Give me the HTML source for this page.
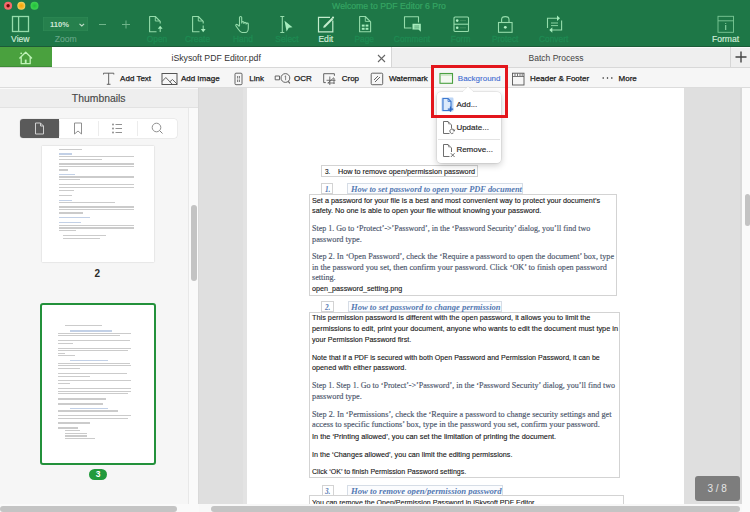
<!DOCTYPE html><html><head><meta charset="utf-8"><style>html,body{margin:0;padding:0;}body{width:750px;height:512px;overflow:hidden;position:relative;background:#dedede;font-family:"Liberation Sans",sans-serif;}body>div,body>svg{position:absolute;}</style></head><body><div style="left:0px;top:0px;width:750px;height:46px;background:#1e7747;"></div><div style="left:0px;top:45.5px;width:750px;height:1.5px;background:#1c5c38;"></div><svg style="position:absolute;left:0px;top:0px;" width="45" height="12" viewBox="0 0 45 12"><defs><radialGradient id="gy"><stop offset="0" stop-color="#f7a600"/><stop offset="0.55" stop-color="#f8b52a"/><stop offset="1" stop-color="#f3d667"/></radialGradient><radialGradient id="gg"><stop offset="0" stop-color="#1fbf38"/><stop offset="1" stop-color="#3fd452"/></radialGradient></defs><circle cx="8.1" cy="5.8" r="4" fill="#f66a6c"/><circle cx="8.1" cy="5.8" r="1.7" fill="#6e0a0a"/><circle cx="21.3" cy="5.8" r="4" fill="url(#gy)"/><circle cx="34.5" cy="5.8" r="4" fill="url(#gg)"/></svg><div style="left:389px;top:1.84px;font-family:'Liberation Sans', sans-serif;font-size:8.7px;line-height:8.7px;color:#35a563;white-space:nowrap;transform:translateX(-50%);-webkit-text-stroke:0.2px #35a563;">Welcome to PDF Editor 6 Pro</div><svg style="position:absolute;left:11px;top:15px;" width="20" height="18" viewBox="0 0 20 18"><rect x="1.5" y="1.5" width="16" height="15" fill="none" stroke="#95dcab" stroke-width="1.3"/><line x1="7.6" y1="1.5" x2="7.6" y2="16.5" stroke="#95dcab" stroke-width="1.3"/></svg><div style="left:20.3px;top:34.52px;font-family:'Liberation Sans', sans-serif;font-size:8.6px;line-height:8.6px;color:#d3eed9;white-space:nowrap;transform:translateX(-50%);-webkit-text-stroke:0.15px #d3eed9;">View</div><div style="left:43.3px;top:16.7px;width:44.7px;height:14px;background:#26804d;box-shadow:inset 0 0 0 0.6px #2f8a57;"></div><div style="left:50px;top:20.57px;font-family:'Liberation Sans', sans-serif;font-size:7.6px;line-height:7.6px;color:#cfe6d6;white-space:nowrap;font-weight:bold;">110%</div><svg style="position:absolute;left:78px;top:21.5px;" width="8" height="6" viewBox="0 0 8 6"><polyline points="1.5,1.8 3.8,4 6.1,1.8" fill="none" stroke="#c0dcc8" stroke-width="1.1"/></svg><div style="left:65.8px;top:34.72px;font-family:'Liberation Sans', sans-serif;font-size:8.6px;line-height:8.6px;color:#68a789;white-space:nowrap;transform:translateX(-50%);-webkit-text-stroke:0.1px #68a789;">Zoom</div><svg style="position:absolute;left:97px;top:18px;" width="36" height="14" viewBox="0 0 36 14"><line x1="2" y1="6.5" x2="9" y2="6.5" stroke="#6fb48a" stroke-width="1"/><line x1="25" y1="6.5" x2="33" y2="6.5" stroke="#6fb48a" stroke-width="1"/><line x1="29" y1="2.5" x2="29" y2="10.5" stroke="#6fb48a" stroke-width="1"/></svg><svg style="position:absolute;left:148px;top:15px;" width="16" height="19" viewBox="0 0 16 19"><path d="M8.5,16.8 H1.6 V1.5 H7.3 L12.2,6.4 V8.5" fill="none" stroke="#95dcab" stroke-width="1.1" stroke-linejoin="round"/><path d="M7.3,1.5 V6 H11.8" fill="none" stroke="#95dcab" stroke-width="0.9"/><path d="M12.2,10.8 L14.6,13.8 H9.8 Z" fill="#a6edbd"/><line x1="12.2" y1="13" x2="12.2" y2="17" stroke="#95dcab" stroke-width="1.1"/></svg><div style="left:157px;top:34.69px;font-family:'Liberation Sans', sans-serif;font-size:8.4px;line-height:8.4px;color:#1d8a52;white-space:nowrap;transform:translateX(-50%);-webkit-text-stroke:0.3px #1d8a52;">Open</div><svg style="position:absolute;left:191px;top:15px;" width="16" height="19" viewBox="0 0 16 19"><path d="M8.5,16.8 H1.6 V1.5 H7.3 L12.2,6.4 V8.5" fill="none" stroke="#95dcab" stroke-width="1.1" stroke-linejoin="round"/><path d="M7.3,1.5 V6 H11.8" fill="none" stroke="#95dcab" stroke-width="0.9"/><line x1="12.2" y1="10.5" x2="12.2" y2="14" stroke="#95dcab" stroke-width="1.1"/><path d="M12.2,17.2 L14.6,14 H9.8 Z" fill="#a6edbd"/></svg><div style="left:197.5px;top:34.69px;font-family:'Liberation Sans', sans-serif;font-size:8.4px;line-height:8.4px;color:#1d8a52;white-space:nowrap;transform:translateX(-50%);-webkit-text-stroke:0.3px #1d8a52;">Create</div><svg style="position:absolute;left:234px;top:15px;" width="18" height="19" viewBox="0 0 18 19"><path d="M5.5,11 V2.6 C5.5,1.2 7.7,1.2 7.7,2.6 V8.5 M7.7,7.6 C7.7,6.3 9.9,6.3 9.9,7.6 V9 M9.9,8.3 C9.9,7 12.1,7 12.1,8.3 V9.5 M12.1,9 C12.1,7.8 14.3,7.8 14.3,9 V13 C14.3,15.5 13,17.5 11.5,17.5 H8 C6.5,17.5 5.5,16 4.5,14.5 L2,11 C1.3,10 2.3,8.8 3.4,9.6 L5.5,11.5" fill="none" stroke="#95dcab" stroke-width="1.1" stroke-linejoin="round"/></svg><div style="left:243px;top:34.69px;font-family:'Liberation Sans', sans-serif;font-size:8.4px;line-height:8.4px;color:#1d8a52;white-space:nowrap;transform:translateX(-50%);-webkit-text-stroke:0.3px #1d8a52;">Hand</div><svg style="position:absolute;left:278px;top:15px;" width="18" height="19" viewBox="0 0 18 19"><line x1="4.3" y1="1.5" x2="4.3" y2="17.5" stroke="#95dcab" stroke-width="1.1"/><line x1="2.3" y1="1.5" x2="6.3" y2="1.5" stroke="#95dcab" stroke-width="1"/><line x1="2.3" y1="17.5" x2="6.3" y2="17.5" stroke="#95dcab" stroke-width="1"/><path d="M6.5,5.8 L14.5,12.3 L10.8,12.7 L8.6,16.6 Z" fill="#a6edbd"/></svg><div style="left:287px;top:34.69px;font-family:'Liberation Sans', sans-serif;font-size:8.4px;line-height:8.4px;color:#1d8a52;white-space:nowrap;transform:translateX(-50%);-webkit-text-stroke:0.3px #1d8a52;">Select</div><svg style="position:absolute;left:317px;top:15px;" width="20" height="19" viewBox="0 0 20 19"><path d="M13,2.4 H1.5 V16.8 H15.8 V5.5" fill="none" stroke="#c4eccd" stroke-width="1.2"/><path d="M6.2,12.8 L6.6,11 L14.8,2.8 L16.3,4.3 L8.1,12.5 Z" fill="#c4eccd"/><circle cx="16" cy="2.6" r="1.1" fill="#c4eccd"/></svg><div style="left:325.8px;top:34.52px;font-family:'Liberation Sans', sans-serif;font-size:8.6px;line-height:8.6px;color:#d3eed9;white-space:nowrap;transform:translateX(-50%);-webkit-text-stroke:0.15px #d3eed9;">Edit</div><svg style="position:absolute;left:358px;top:15px;" width="16" height="19" viewBox="0 0 16 19"><path d="M1.6,1.5 H7.3 L12.6,6.8 V16.8 H1.6 Z" fill="none" stroke="#95dcab" stroke-width="1.1" stroke-linejoin="round"/><path d="M7.3,1.5 V6.4 H12.2" fill="none" stroke="#95dcab" stroke-width="0.9"/><rect x="3.8" y="9.6" width="2.8" height="2" fill="#a6edbd"/><rect x="7.6" y="9.6" width="2.8" height="2" fill="#a6edbd"/><rect x="3.8" y="12.8" width="2.8" height="2" fill="#a6edbd"/><rect x="7.6" y="12.8" width="2.8" height="2" fill="#a6edbd"/></svg><div style="left:364.2px;top:34.69px;font-family:'Liberation Sans', sans-serif;font-size:8.4px;line-height:8.4px;color:#1d8a52;white-space:nowrap;transform:translateX(-50%);-webkit-text-stroke:0.3px #1d8a52;">Page</div><svg style="position:absolute;left:403px;top:15px;" width="20" height="18" viewBox="0 0 20 18"><path d="M8.5,13 H1.5 V1.8 H15.5 V7.5" fill="none" stroke="#95dcab" stroke-width="1.1" stroke-linejoin="round"/><path d="M9.5,8.8 H17.8 V16.8 L15.5,14.6 H9.5 Z" fill="#a6edbd"/><line x1="11.3" y1="11" x2="16.2" y2="11" stroke="#1e7747" stroke-width="0.6"/><line x1="11.3" y1="12.9" x2="16.2" y2="12.9" stroke="#1e7747" stroke-width="0.6"/></svg><div style="left:412px;top:34.69px;font-family:'Liberation Sans', sans-serif;font-size:8.4px;line-height:8.4px;color:#1d8a52;white-space:nowrap;transform:translateX(-50%);-webkit-text-stroke:0.3px #1d8a52;">Comment</div><svg style="position:absolute;left:453px;top:16px;" width="17" height="17" viewBox="0 0 17 17"><rect x="1" y="1" width="14.5" height="14.5" rx="1" fill="none" stroke="#95dcab" stroke-width="1.1"/><line x1="1" y1="8.2" x2="15.5" y2="8.2" stroke="#95dcab" stroke-width="1.1"/><circle cx="4.2" cy="4.6" r="1.3" fill="#b0f0c4"/><circle cx="4.2" cy="11.8" r="1.3" fill="#b0f0c4"/><line x1="7" y1="4.6" x2="13" y2="4.6" stroke="#3f8f5e" stroke-width="1"/><line x1="7" y1="11.8" x2="13" y2="11.8" stroke="#3f8f5e" stroke-width="1"/></svg><div style="left:460.6px;top:34.69px;font-family:'Liberation Sans', sans-serif;font-size:8.4px;line-height:8.4px;color:#1d8a52;white-space:nowrap;transform:translateX(-50%);-webkit-text-stroke:0.3px #1d8a52;">Form</div><svg style="position:absolute;left:497px;top:15px;" width="17" height="19" viewBox="0 0 17 19"><path d="M4.6,7.5 V4.5 C4.6,2.4 6.2,1.6 8.3,1.6 C10.4,1.6 12,2.4 12,4.5 V7.5" fill="none" stroke="#95dcab" stroke-width="1.1"/><rect x="1.5" y="7.5" width="13.6" height="9.8" fill="none" stroke="#95dcab" stroke-width="1.1"/><circle cx="8.3" cy="12.3" r="1.4" fill="#b0f0c4"/></svg><div style="left:505.2px;top:34.69px;font-family:'Liberation Sans', sans-serif;font-size:8.4px;line-height:8.4px;color:#1d8a52;white-space:nowrap;transform:translateX(-50%);-webkit-text-stroke:0.3px #1d8a52;">Protect</div><svg style="position:absolute;left:545px;top:15px;" width="19" height="19" viewBox="0 0 19 19"><path d="M12.5,3.3 H2.5 V13" fill="none" stroke="#95dcab" stroke-width="1.1"/><path d="M12,0.6 L15,3.3 L12,6 Z" fill="#a6edbd"/><path d="M16.6,5.5 V15 H6.5" fill="none" stroke="#95dcab" stroke-width="1.1"/><path d="M7.3,12.3 L4.3,15 L7.3,17.7 Z" fill="#a6edbd"/><line x1="6" y1="8" x2="13" y2="8" stroke="#95dcab" stroke-width="0.9"/><line x1="6" y1="10.6" x2="13" y2="10.6" stroke="#95dcab" stroke-width="0.9"/></svg><div style="left:553.6px;top:34.69px;font-family:'Liberation Sans', sans-serif;font-size:8.4px;line-height:8.4px;color:#1d8a52;white-space:nowrap;transform:translateX(-50%);-webkit-text-stroke:0.3px #1d8a52;">Convert</div><svg style="position:absolute;left:717px;top:15px;" width="18" height="18" viewBox="0 0 18 18"><rect x="1" y="1.3" width="15.5" height="16" fill="none" stroke="#7cc897" stroke-width="0.9"/><line x1="1" y1="5.8" x2="16.5" y2="5.8" stroke="#7cc897" stroke-width="0.9"/><line x1="8.7" y1="10" x2="8.7" y2="15" stroke="#8fd6a6" stroke-width="1.1"/><circle cx="8.7" cy="8.5" r="0.6" fill="#8fd6a6"/></svg><div style="left:725.5px;top:34.56px;font-family:'Liberation Sans', sans-serif;font-size:8.55px;line-height:8.55px;color:#d3eed9;white-space:nowrap;transform:translateX(-50%);-webkit-text-stroke:0.15px #d3eed9;">Format</div><div style="left:0px;top:47px;width:750px;height:21px;background:#ffffff;"></div><div style="left:391px;top:47px;width:359px;height:21px;background:#efefef;"></div><div style="left:391px;top:47px;width:359px;height:1px;background:#fbfbfb;"></div><div style="left:391px;top:47px;width:1px;height:21px;background:#d6d6d6;"></div><div style="left:730px;top:47px;width:1px;height:21px;background:#d6d6d6;"></div><div style="left:0px;top:47px;width:52px;height:20px;background:#4aa13e;"></div><div style="left:0px;top:66.3px;width:52px;height:1.2px;background:#3f8c37;"></div><div style="left:0px;top:67px;width:750px;height:1px;background:#d8d8d8;"></div><svg style="position:absolute;left:18px;top:50px;" width="16" height="16" viewBox="0 0 16 16"><path d="M1.8,8 L7.7,2.3 L13.6,8 M3.2,6.6 V13.7 H12.2 V6.6" fill="none" stroke="#bff3b8" stroke-width="1.3" stroke-linejoin="round" stroke-linecap="round"/><rect x="6.8" y="9.6" width="1.8" height="4.2" fill="#bff3b8"/><circle cx="3.2" cy="3.3" r="0.9" fill="#bff3b8"/></svg><div style="left:216.2px;top:54.14px;font-family:'Liberation Sans', sans-serif;font-size:8.7px;line-height:8.7px;color:#333333;white-space:nowrap;transform:translateX(-50%);">iSkysoft PDF Editor.pdf</div><svg style="position:absolute;left:377px;top:54px;" width="9" height="9" viewBox="0 0 9 9"><path d="M1,1 L8,8 M8,1 L1,8" stroke="#666" stroke-width="1.1"/></svg><div style="left:556px;top:54.30px;font-family:'Liberation Sans', sans-serif;font-size:8.5px;line-height:8.5px;color:#444444;white-space:nowrap;transform:translateX(-50%);">Batch Process</div><svg style="position:absolute;left:735px;top:51px;" width="12" height="12" viewBox="0 0 12 12"><path d="M6,0.5 V11.5 M0.5,6 H11.5" stroke="#444" stroke-width="1.4"/></svg><div style="left:0px;top:68px;width:750px;height:20px;background:#f6f6f6;"></div><div style="left:0px;top:87px;width:750px;height:1px;background:#dcdcdc;"></div><svg style="position:absolute;left:102px;top:72px;" width="14" height="14" viewBox="0 0 14 14"><path d="M1.5,2.5 V1.2 H11.8 V2.5 M6.65,1.2 V12.3 M4.8,12.3 H8.5" fill="none" stroke="#555555" stroke-width="0.9"/></svg><div style="left:120.1px;top:74.53px;font-family:'Liberation Sans', sans-serif;font-size:8px;line-height:8px;color:#1a1a1a;white-space:nowrap;-webkit-text-stroke:0.25px #1a1a1a;">Add Text</div><svg style="position:absolute;left:161px;top:72px;" width="17" height="14" viewBox="0 0 17 14"><rect x="1" y="1.5" width="15" height="11" fill="none" stroke="#555555" stroke-width="1"/><path d="M1,9.5 L4.8,5.5 L11,12 M8.8,9.8 L11.5,7.5 L16,12" fill="none" stroke="#555555" stroke-width="0.9"/></svg><div style="left:180.9px;top:74.53px;font-family:'Liberation Sans', sans-serif;font-size:8px;line-height:8px;color:#1a1a1a;white-space:nowrap;-webkit-text-stroke:0.25px #1a1a1a;">Add Image</div><svg style="position:absolute;left:234px;top:72px;" width="9" height="14" viewBox="0 0 9 14"><rect x="1" y="1.2" width="7" height="11.5" rx="1" fill="none" stroke="#555555" stroke-width="0.9"/><path d="M3.6,4 V6.5 M5.4,4 V6.5 M3.6,7.5 V10 M5.4,7.5 V10" stroke="#555555" stroke-width="0.8"/></svg><div style="left:249.3px;top:74.53px;font-family:'Liberation Sans', sans-serif;font-size:8px;line-height:8px;color:#1a1a1a;white-space:nowrap;-webkit-text-stroke:0.25px #1a1a1a;">Link</div><svg style="position:absolute;left:274px;top:71px;" width="17" height="15" viewBox="0 0 17 15"><path d="M1.2,5 H5.5 V8.8 H1.2 Z" fill="none" stroke="#555555" stroke-width="0.9"/><circle cx="11.4" cy="7" r="4.4" fill="none" stroke="#555555" stroke-width="0.9"/><line x1="14.3" y1="10.3" x2="15.8" y2="12.3" stroke="#555555" stroke-width="1.1"/><path d="M10.7,5.5 L11.6,4.9 V9.2" fill="none" stroke="#555555" stroke-width="0.7"/></svg><div style="left:294px;top:74.53px;font-family:'Liberation Sans', sans-serif;font-size:8px;line-height:8px;color:#1a1a1a;white-space:nowrap;-webkit-text-stroke:0.25px #1a1a1a;">OCR</div><svg style="position:absolute;left:322px;top:72px;" width="15" height="15" viewBox="0 0 15 15"><path d="M3.8,10.6 H1.7 V1.7 H12.4 V3.8" fill="none" stroke="#555555" stroke-width="0.9"/><path d="M7.8,4.5 V13 M4.5,8.3 H13.5 M12,6 V12 M5.5,11 H12.5 M6,11 L12,5.5" fill="none" stroke="#555555" stroke-width="0.8"/></svg><div style="left:341.7px;top:74.53px;font-family:'Liberation Sans', sans-serif;font-size:8px;line-height:8px;color:#1a1a1a;white-space:nowrap;-webkit-text-stroke:0.25px #1a1a1a;">Crop</div><svg style="position:absolute;left:370px;top:72px;" width="14" height="14" viewBox="0 0 14 14"><rect x="1.2" y="1.2" width="11.5" height="11.5" rx="1" fill="none" stroke="#555555" stroke-width="0.9"/><path d="M4,8 L8,4 M5,10 L10,5" stroke="#555555" stroke-width="0.9"/></svg><div style="left:389px;top:74.53px;font-family:'Liberation Sans', sans-serif;font-size:8px;line-height:8px;color:#1a1a1a;white-space:nowrap;-webkit-text-stroke:0.25px #1a1a1a;">Watermark</div><svg style="position:absolute;left:439px;top:72px;" width="15" height="13" viewBox="0 0 15 13"><rect x="1" y="1.5" width="12.5" height="9.8" fill="#f4f8f1" stroke="#4aa040" stroke-width="1.1"/><line x1="1.5" y1="3" x2="13" y2="3" stroke="#9fcf95" stroke-width="0.8"/></svg><div style="left:457.8px;top:74.53px;font-family:'Liberation Sans', sans-serif;font-size:8px;line-height:8px;color:#3d6bd1;white-space:nowrap;-webkit-text-stroke:0.1px #3d6bd1;">Background</div><svg style="position:absolute;left:511px;top:72px;" width="15" height="15" viewBox="0 0 15 15"><rect x="1.5" y="1.2" width="11.5" height="11.8" fill="none" stroke="#555555" stroke-width="0.9"/><line x1="1.5" y1="4.5" x2="13" y2="4.5" stroke="#555555" stroke-width="0.8"/><path d="M4,1.5 V4 M6.5,1.5 V4 M9,1.5 V4 M11.2,1.5 V4" stroke="#555555" stroke-width="0.8"/></svg><div style="left:530px;top:74.53px;font-family:'Liberation Sans', sans-serif;font-size:8px;line-height:8px;color:#1a1a1a;white-space:nowrap;-webkit-text-stroke:0.25px #1a1a1a;">Header &amp; Footer</div><svg style="position:absolute;left:601px;top:76px;" width="13" height="4" viewBox="0 0 13 4"><circle cx="2.2" cy="2" r="0.75" fill="#1a1a1a"/><circle cx="6.5" cy="2" r="0.75" fill="#1a1a1a"/><circle cx="10.8" cy="2" r="0.75" fill="#1a1a1a"/></svg><div style="left:618.6px;top:74.53px;font-family:'Liberation Sans', sans-serif;font-size:8px;line-height:8px;color:#1a1a1a;white-space:nowrap;-webkit-text-stroke:0.25px #1a1a1a;">More</div><div style="left:0px;top:88px;width:199px;height:424px;background:#f6f6f6;"></div><div style="left:0px;top:88px;width:199px;height:20px;background:#eeeeee;"></div><div style="left:0px;top:88px;width:199px;height:1px;background:#fafafa;"></div><div style="left:0px;top:107px;width:199px;height:1px;background:#e2e2e2;"></div><div style="left:98.7px;top:93.80px;font-family:'Liberation Sans', sans-serif;font-size:10.4px;line-height:10.4px;color:#484848;white-space:nowrap;transform:translateX(-50%);-webkit-text-stroke:0.15px #484848;">Thumbnails</div><div style="left:188px;top:108px;width:1px;height:404px;background:#e8e8e8;"></div><div style="left:189px;top:108px;width:10px;height:404px;background:#fafafa;"></div><div style="left:198px;top:88px;width:1px;height:424px;background:#d9d9d9;"></div><div style="left:191px;top:204.5px;width:6px;height:76px;background:#c3c3c3;border-radius:3px;"></div><div style="left:19.5px;top:119px;width:157.5px;height:19px;background:#ffffff;border-radius:3px;box-shadow:0 0 0 0.5px #e0e0e0;"></div><div style="left:19.5px;top:119px;width:39.5px;height:19px;background:#5a5a5a;border-radius:3px 0 0 3px;"></div><div style="left:98px;top:121px;width:1px;height:15px;background:#ececec;"></div><div style="left:137.3px;top:121px;width:1px;height:15px;background:#ececec;"></div><div style="left:59px;top:121px;width:1px;height:15px;background:#ececec;"></div><svg style="position:absolute;left:34px;top:122px;" width="11" height="13" viewBox="0 0 11 13"><path d="M1.5,1 H6.5 L9.5,4 V12 H1.5 Z M6.5,1 V4 H9.5" fill="none" stroke="#d0d0d0" stroke-width="1"/></svg><svg style="position:absolute;left:73px;top:122px;" width="11" height="13" viewBox="0 0 11 13"><path d="M1.5,1 H8.5 V12 L5,9 L1.5,12 Z" fill="none" stroke="#858585" stroke-width="0.9"/></svg><svg style="position:absolute;left:111px;top:122px;" width="13" height="13" viewBox="0 0 13 13"><circle cx="2" cy="2.5" r="0.9" fill="#858585"/><circle cx="2" cy="6.5" r="0.9" fill="#858585"/><circle cx="2" cy="10.5" r="0.9" fill="#858585"/><path d="M4.5,2.5 H11 M4.5,6.5 H11 M4.5,10.5 H11" stroke="#858585" stroke-width="0.9"/></svg><svg style="position:absolute;left:151px;top:122px;" width="13" height="13" viewBox="0 0 13 13"><circle cx="5.5" cy="5.5" r="4.3" fill="none" stroke="#858585" stroke-width="0.9"/><line x1="8.6" y1="8.6" x2="11.5" y2="11.5" stroke="#858585" stroke-width="1"/></svg><div style="left:42.2px;top:146px;width:111.8px;height:115.6px;background:#fff;box-shadow:0 0 1.5px rgba(0,0,0,0.22);"></div><div style="left:58.9px;top:149.1px;width:23.000000000000007px;height:1.2px;background:#cbcbcb;"></div><div style="left:58.9px;top:153.4px;width:13.100000000000001px;height:1.2px;background:#c2d0e6;"></div><div style="left:58.9px;top:156.1px;width:75.6px;height:1.2px;background:#cbcbcb;"></div><div style="left:58.9px;top:158.70000000000002px;width:43.1px;height:1.2px;background:#cbcbcb;"></div><div style="left:58.9px;top:163.4px;width:75.6px;height:1.2px;background:#cbcbcb;"></div><div style="left:58.9px;top:166.20000000000002px;width:75.6px;height:1.2px;background:#cbcbcb;"></div><div style="left:58.9px;top:169.4px;width:9.100000000000001px;height:1.2px;background:#cbcbcb;"></div><div style="left:58.9px;top:173.70000000000002px;width:16.500000000000007px;height:1.2px;background:#c2d0e6;"></div><div style="left:58.9px;top:176.4px;width:75.6px;height:1.2px;background:#cbcbcb;"></div><div style="left:58.9px;top:179.1px;width:20.800000000000004px;height:1.2px;background:#cbcbcb;"></div><div style="left:58.9px;top:184.1px;width:75.6px;height:1.2px;background:#cbcbcb;"></div><div style="left:58.9px;top:187.1px;width:75.6px;height:1.2px;background:#cbcbcb;"></div><div style="left:58.9px;top:189.8px;width:15.100000000000001px;height:1.2px;background:#cbcbcb;"></div><div style="left:58.9px;top:194.8px;width:13.100000000000001px;height:1.2px;background:#cbcbcb;"></div><div style="left:58.9px;top:199.5px;width:13.100000000000001px;height:1.2px;background:#c2d0e6;"></div><div style="left:58.9px;top:202.3px;width:56.1px;height:1.2px;background:#cbcbcb;"></div><div style="left:58.9px;top:206.4px;width:75.6px;height:1.2px;background:#cbcbcb;"></div><div style="left:58.9px;top:209.20000000000002px;width:75.6px;height:1.2px;background:#cbcbcb;"></div><div style="left:58.9px;top:212.4px;width:24.1px;height:1.2px;background:#cbcbcb;"></div><div style="left:58.9px;top:216.70000000000002px;width:31.500000000000007px;height:1.2px;background:#c2d0e6;"></div><div style="left:58.9px;top:221.6px;width:21.9px;height:1.2px;background:#c2d0e6;"></div><div style="left:58.9px;top:224.6px;width:75.6px;height:1.2px;background:#cbcbcb;"></div><div style="left:58.9px;top:227.4px;width:75.6px;height:1.2px;background:#cbcbcb;"></div><div style="left:58.9px;top:230.20000000000002px;width:17.6px;height:1.2px;background:#cbcbcb;"></div><div style="left:62.5px;top:234.5px;width:43.0px;height:1.2px;background:#cbcbcb;"></div><div style="left:62.5px;top:238.20000000000002px;width:37.5px;height:1.2px;background:#cbcbcb;"></div><div style="left:97.4px;top:269.04px;font-family:'Liberation Sans', sans-serif;font-size:10px;line-height:10px;color:#2a2a2a;white-space:nowrap;transform:translateX(-50%);font-weight:bold;">2</div><div style="left:40.2px;top:303.2px;width:115.6px;height:161.4px;background:#fff;border:2.3px solid #23913b;border-radius:3px;box-sizing:border-box;"></div><div style="left:65px;top:325.29999999999995px;width:36.5px;height:1.2px;background:#cbcbcb;"></div><div style="left:70px;top:330.4px;width:41.5px;height:1.2px;background:#c2d0e6;"></div><div style="left:58.3px;top:332.59999999999997px;width:72.7px;height:1.2px;background:#cbcbcb;"></div><div style="left:58.3px;top:335.29999999999995px;width:61.5px;height:1.2px;background:#cbcbcb;"></div><div style="left:58.3px;top:340.29999999999995px;width:71.50000000000001px;height:1.2px;background:#cbcbcb;"></div><div style="left:58.3px;top:342.9px;width:14.700000000000003px;height:1.2px;background:#cbcbcb;"></div><div style="left:58.3px;top:347.59999999999997px;width:72.7px;height:1.2px;background:#cbcbcb;"></div><div style="left:58.3px;top:350.29999999999995px;width:69.7px;height:1.2px;background:#cbcbcb;"></div><div style="left:58.3px;top:352.59999999999997px;width:6.700000000000003px;height:1.2px;background:#cbcbcb;"></div><div style="left:58.3px;top:354.9px;width:16.700000000000003px;height:1.2px;background:#cbcbcb;"></div><div style="left:70px;top:360.2px;width:38px;height:1.2px;background:#c2d0e6;"></div><div style="left:58.3px;top:362.59999999999997px;width:71.7px;height:1.2px;background:#cbcbcb;"></div><div style="left:58.3px;top:365.2px;width:72.7px;height:1.2px;background:#cbcbcb;"></div><div style="left:58.3px;top:367.9px;width:21.700000000000003px;height:1.2px;background:#cbcbcb;"></div><div style="left:58.3px;top:373.2px;width:68.7px;height:1.2px;background:#cbcbcb;"></div><div style="left:58.3px;top:375.9px;width:31.700000000000003px;height:1.2px;background:#cbcbcb;"></div><div style="left:58.3px;top:380.2px;width:72.7px;height:1.2px;background:#cbcbcb;"></div><div style="left:58.3px;top:382.79999999999995px;width:11.700000000000003px;height:1.2px;background:#cbcbcb;"></div><div style="left:58.3px;top:387.79999999999995px;width:72.7px;height:1.2px;background:#cbcbcb;"></div><div style="left:58.3px;top:390.5px;width:72.7px;height:1.2px;background:#cbcbcb;"></div><div style="left:58.3px;top:392.79999999999995px;width:69.7px;height:1.2px;background:#cbcbcb;"></div><div style="left:58.3px;top:398.4px;width:48.2px;height:1.2px;background:#cbcbcb;"></div><div style="left:58.3px;top:403.4px;width:44.7px;height:1.2px;background:#cbcbcb;"></div><div style="left:70px;top:408.09999999999997px;width:38px;height:1.2px;background:#c2d0e6;"></div><div style="left:58.3px;top:410.4px;width:59.7px;height:1.2px;background:#cbcbcb;"></div><div style="left:58.3px;top:415.09999999999997px;width:72.7px;height:1.2px;background:#cbcbcb;"></div><div style="left:58.3px;top:417.79999999999995px;width:69.7px;height:1.2px;background:#cbcbcb;"></div><div style="left:58.3px;top:422.4px;width:31.700000000000003px;height:1.2px;background:#cbcbcb;"></div><div style="left:58.3px;top:427.4px;width:19.700000000000003px;height:1.2px;background:#cbcbcb;"></div><div style="left:65px;top:430.09999999999997px;width:15px;height:1.2px;background:#cbcbcb;"></div><div style="left:65px;top:432.7px;width:21.5px;height:1.2px;background:#cbcbcb;"></div><div style="left:65px;top:435.4px;width:21.5px;height:1.2px;background:#cbcbcb;"></div><div style="left:65px;top:438.0px;width:30px;height:1.2px;background:#cbcbcb;"></div><div style="left:89px;top:468.8px;width:18.4px;height:10.8px;background:#229a3c;border-radius:5.5px;"></div><div style="left:98.2px;top:470.10px;font-family:'Liberation Sans', sans-serif;font-size:8.5px;line-height:8.5px;color:#ffffff;white-space:nowrap;transform:translateX(-50%);font-weight:bold;">3</div><div style="left:0px;top:503.5px;width:199px;height:8.5px;background:#fafafa;"></div><div style="left:0px;top:505.5px;width:176.7px;height:6px;background:#c4c4c4;border-radius:3px;"></div><div style="left:199px;top:88px;width:551px;height:424px;background:#dfdfdf;"></div><div style="left:740.3px;top:88px;width:2px;height:424px;background:#d8d8d8;"></div><div style="left:742px;top:88px;width:8px;height:424px;background:#fafafa;"></div><div style="left:745px;top:193.7px;width:5px;height:32px;background:#c3c3c3;border-radius:2.5px;"></div><div style="left:247px;top:88px;width:437px;height:424px;background:#ffffff;"></div><div style="left:243px;top:88px;width:4px;height:424px;background:#e3e3e3;"></div><div style="left:321.4px;top:165.1px;width:156.20000000000005px;height:12.200000000000017px;border:1px solid #d3d3d3;box-sizing:border-box;background:transparent;"></div><div id="f0" style="left:324.6px;top:167.98px;font-family:'Liberation Sans', sans-serif;font-size:7.7px;line-height:7.7px;color:#161616;white-space:nowrap;transform-origin:0 0;transform:scaleX(0.8409);-webkit-text-stroke:0.12px #161616;">3.</div><div id="f1" style="left:337.6px;top:167.98px;font-family:'Liberation Sans', sans-serif;font-size:7.7px;line-height:7.7px;color:#161616;white-space:nowrap;transform-origin:0 0;transform:scaleX(0.9437);-webkit-text-stroke:0.12px #161616;">How to remove open/permission password</div><div style="left:321.3px;top:183.3px;width:12.099999999999966px;height:10.299999999999983px;border:1px solid #d3d3d3;box-sizing:border-box;background:transparent;"></div><div id="f2" style="left:325.1px;top:185.38px;font-family:'Liberation Serif', serif;font-size:8.5px;line-height:8.5px;color:#5479b2;white-space:nowrap;transform-origin:0 0;transform:scaleX(0.8471);-webkit-text-stroke:0px #5479b2;font-weight:bold;font-style:italic;">1.</div><div style="left:347.4px;top:183.3px;width:175.80000000000007px;height:10.299999999999983px;border:1px solid #d6dde6;box-sizing:border-box;background:#fbfcfe;"></div><div id="f3" style="left:350.6px;top:185.28px;font-family:'Liberation Serif', serif;font-size:8.5px;line-height:8.5px;color:#5479b2;white-space:nowrap;transform-origin:0 0;transform:scaleX(0.9869);-webkit-text-stroke:0px #5479b2;font-weight:bold;font-style:italic;">How to set password to open your PDF document</div><div style="left:308.9px;top:193.6px;width:307.70000000000005px;height:102.00000000000003px;border:1px solid #d3d3d3;box-sizing:border-box;background:transparent;"></div><div id="f4" style="left:311.5px;top:196.78px;font-family:'Liberation Sans', sans-serif;font-size:7.7px;line-height:7.7px;color:#161616;white-space:nowrap;transform-origin:0 0;transform:scaleX(0.9431);-webkit-text-stroke:0.12px #161616;">Set a password for your file is a best and most convenient way to protect your document’s</div><div id="f5" style="left:311.5px;top:206.88px;font-family:'Liberation Sans', sans-serif;font-size:7.7px;line-height:7.7px;color:#161616;white-space:nowrap;transform-origin:0 0;transform:scaleX(0.9503);-webkit-text-stroke:0.12px #161616;">safety. No one is able to open your file without knowing your password.</div><div id="f6" style="left:311.5px;top:225.27px;font-family:'Liberation Serif', serif;font-size:8.4px;line-height:8.4px;color:#4c566c;white-space:nowrap;transform-origin:0 0;transform:scaleX(0.9579);-webkit-text-stroke:0.15px #4c566c;">Step 1. Go to ‘Protect’-&gt;’Password’, in the ‘Password Security’ dialog, you’ll find two</div><div id="f7" style="left:311.5px;top:235.56px;font-family:'Liberation Serif', serif;font-size:8.4px;line-height:8.4px;color:#4c566c;white-space:nowrap;transform-origin:0 0;transform:scaleX(0.9910);-webkit-text-stroke:0.15px #4c566c;">password type.</div><div id="f8" style="left:311.5px;top:253.16px;font-family:'Liberation Serif', serif;font-size:8.4px;line-height:8.4px;color:#4c566c;white-space:nowrap;transform-origin:0 0;transform:scaleX(0.9771);-webkit-text-stroke:0.15px #4c566c;">Step 2. In ‘Open Password’, check the ‘Require a password to open the document’ box, type</div><div id="f9" style="left:311.5px;top:263.56px;font-family:'Liberation Serif', serif;font-size:8.4px;line-height:8.4px;color:#4c566c;white-space:nowrap;transform-origin:0 0;transform:scaleX(0.9814);-webkit-text-stroke:0.15px #4c566c;">in the password you set, then confirm your password. Click ‘OK’ to finish open password</div><div id="f10" style="left:311.5px;top:273.86px;font-family:'Liberation Serif', serif;font-size:8.4px;line-height:8.4px;color:#4c566c;white-space:nowrap;transform-origin:0 0;transform:scaleX(0.9657);-webkit-text-stroke:0.15px #4c566c;">setting.</div><div id="f11" style="left:311.5px;top:284.88px;font-family:'Liberation Sans', sans-serif;font-size:7.7px;line-height:7.7px;color:#161616;white-space:nowrap;transform-origin:0 0;transform:scaleX(0.9389);-webkit-text-stroke:0.12px #161616;">open_password_setting.png</div><div style="left:321.2px;top:300.8px;width:12.5px;height:11.699999999999989px;border:1px solid #d3d3d3;box-sizing:border-box;background:transparent;"></div><div id="f12" style="left:325.1px;top:303.18px;font-family:'Liberation Serif', serif;font-size:8.5px;line-height:8.5px;color:#5479b2;white-space:nowrap;transform-origin:0 0;transform:scaleX(0.8471);-webkit-text-stroke:0px #5479b2;font-weight:bold;font-style:italic;">2.</div><div style="left:347.5px;top:300.8px;width:154.89999999999998px;height:11.399999999999977px;border:1px solid #d6dde6;box-sizing:border-box;background:#fbfcfe;"></div><div id="f13" style="left:350.6px;top:303.18px;font-family:'Liberation Serif', serif;font-size:8.5px;line-height:8.5px;color:#5479b2;white-space:nowrap;transform-origin:0 0;transform:scaleX(1.0087);-webkit-text-stroke:0px #5479b2;font-weight:bold;font-style:italic;">How to set password to change permission</div><div style="left:308.9px;top:311.6px;width:311.1px;height:166.39999999999998px;border:1px solid #d3d3d3;box-sizing:border-box;background:transparent;"></div><div id="f14" style="left:311.5px;top:313.88px;font-family:'Liberation Sans', sans-serif;font-size:7.7px;line-height:7.7px;color:#161616;white-space:nowrap;transform-origin:0 0;transform:scaleX(0.9516);-webkit-text-stroke:0.12px #161616;">This permission password is different with the open password, it allows you to limit the</div><div id="f15" style="left:311.5px;top:325.08px;font-family:'Liberation Sans', sans-serif;font-size:7.7px;line-height:7.7px;color:#161616;white-space:nowrap;transform-origin:0 0;transform:scaleX(0.9576);-webkit-text-stroke:0.12px #161616;">permissions to edit, print your document, anyone who wants to edit the document must type in</div><div id="f16" style="left:311.5px;top:335.78px;font-family:'Liberation Sans', sans-serif;font-size:7.7px;line-height:7.7px;color:#161616;white-space:nowrap;transform-origin:0 0;transform:scaleX(0.9205);-webkit-text-stroke:0.12px #161616;">your Permission Password first.</div><div id="f17" style="left:311.5px;top:354.08px;font-family:'Liberation Sans', sans-serif;font-size:7.7px;line-height:7.7px;color:#161616;white-space:nowrap;transform-origin:0 0;transform:scaleX(0.9214);-webkit-text-stroke:0.12px #161616;">Note that if a PDF is secured with both Open Password and Permission Password, it can be</div><div id="f18" style="left:311.5px;top:364.18px;font-family:'Liberation Sans', sans-serif;font-size:7.7px;line-height:7.7px;color:#161616;white-space:nowrap;transform-origin:0 0;transform:scaleX(0.9440);-webkit-text-stroke:0.12px #161616;">opened with either password.</div><div id="f19" style="left:311.5px;top:382.26px;font-family:'Liberation Serif', serif;font-size:8.4px;line-height:8.4px;color:#4c566c;white-space:nowrap;transform-origin:0 0;transform:scaleX(0.9595);-webkit-text-stroke:0.15px #4c566c;">Step 1. Step 1. Go to ‘Protect’-&gt;’Password’, in the ‘Password Security’ dialog, you’ll find two</div><div id="f20" style="left:311.5px;top:393.06px;font-family:'Liberation Serif', serif;font-size:8.4px;line-height:8.4px;color:#4c566c;white-space:nowrap;transform-origin:0 0;transform:scaleX(0.9910);-webkit-text-stroke:0.15px #4c566c;">password type.</div><div id="f21" style="left:311.5px;top:411.36px;font-family:'Liberation Serif', serif;font-size:8.4px;line-height:8.4px;color:#4c566c;white-space:nowrap;transform-origin:0 0;transform:scaleX(0.9830);-webkit-text-stroke:0.15px #4c566c;">Step 2. In ‘Permissions’, check the ‘Require a password to change security settings and get</div><div id="f22" style="left:311.5px;top:421.36px;font-family:'Liberation Serif', serif;font-size:8.4px;line-height:8.4px;color:#4c566c;white-space:nowrap;transform-origin:0 0;transform:scaleX(0.9873);-webkit-text-stroke:0.15px #4c566c;">access to specific functions’ box, type in the password you set, confirm your password.</div><div id="f23" style="left:311.5px;top:432.68px;font-family:'Liberation Sans', sans-serif;font-size:7.7px;line-height:7.7px;color:#161616;white-space:nowrap;transform-origin:0 0;transform:scaleX(0.9584);-webkit-text-stroke:0.12px #161616;">In the ‘Printing allowed’, you can set the limitation of printing the document.</div><div id="f24" style="left:311.5px;top:450.98px;font-family:'Liberation Sans', sans-serif;font-size:7.7px;line-height:7.7px;color:#161616;white-space:nowrap;transform-origin:0 0;transform:scaleX(0.9380);-webkit-text-stroke:0.12px #161616;">In the ‘Changes allowed’, you can limit the editing permissions.</div><div id="f25" style="left:311.5px;top:468.08px;font-family:'Liberation Sans', sans-serif;font-size:7.7px;line-height:7.7px;color:#161616;white-space:nowrap;transform-origin:0 0;transform:scaleX(0.9153);-webkit-text-stroke:0.12px #161616;">Click ‘OK’ to finish Permission Password settings.</div><div style="left:321.5px;top:484.6px;width:12.300000000000011px;height:11.899999999999977px;border:1px solid #d3d3d3;box-sizing:border-box;background:transparent;"></div><div id="f26" style="left:325.1px;top:487.28px;font-family:'Liberation Serif', serif;font-size:8.5px;line-height:8.5px;color:#5479b2;white-space:nowrap;transform-origin:0 0;transform:scaleX(0.8471);-webkit-text-stroke:0px #5479b2;font-weight:bold;font-style:italic;">3.</div><div style="left:347.1px;top:484.8px;width:156.39999999999998px;height:11.199999999999989px;border:1px solid #d6dde6;box-sizing:border-box;background:#fbfcfe;"></div><div id="f27" style="left:350.6px;top:487.18px;font-family:'Liberation Serif', serif;font-size:8.5px;line-height:8.5px;color:#5479b2;white-space:nowrap;transform-origin:0 0;transform:scaleX(1.0221);-webkit-text-stroke:0px #5479b2;font-weight:bold;font-style:italic;">How to remove open/permission password</div><div style="left:308.9px;top:495.3px;width:315.6px;height:24.69999999999999px;border:1px solid #d3d3d3;box-sizing:border-box;background:transparent;"></div><div id="f28" style="left:311.5px;top:498.88px;font-family:'Liberation Sans', sans-serif;font-size:7.7px;line-height:7.7px;color:#161616;white-space:nowrap;transform-origin:0 0;transform:scaleX(0.9192);-webkit-text-stroke:0.12px #161616;">You can remove the Open/Permission Password in iSkysoft PDF Editor.</div><div style="left:199px;top:503.7px;width:543px;height:8.3px;background:#f8f8f8;"></div><div style="left:211.3px;top:505.5px;width:528.5px;height:6px;background:#c4c4c4;border-radius:3px;"></div><div style="left:694.7px;top:476px;width:45.5px;height:25px;background:#7d7d7d;border-radius:3px;"></div><div style="left:717.2px;top:484.04px;font-family:'Liberation Sans', sans-serif;font-size:10px;line-height:10px;color:#e6e6e6;white-space:nowrap;transform:translateX(-50%);">3 / 8</div><div style="left:436.8px;top:92px;width:64.2px;height:70.7px;background:#fff;border-radius:4px;box-shadow:0 0 0 0.5px rgba(0,0,0,0.10),0 2px 7px rgba(0,0,0,0.22);"></div><svg style="position:absolute;left:461px;top:86px;" width="14" height="7" viewBox="0 0 14 7"><path d="M0,7 L7,0.5 L14,7 Z" fill="#fff" stroke="rgba(0,0,0,0.10)" stroke-width="0.6"/><rect x="0" y="6" width="14" height="2" fill="#fff"/></svg><div style="left:438px;top:116.2px;width:62px;height:0.6px;background:#e3e3e3;"></div><div style="left:438px;top:139px;width:62px;height:0.6px;background:#e3e3e3;"></div><svg style="position:absolute;left:440px;top:96px;" width="17" height="17" viewBox="0 0 17 17"><rect x="1.5" y="1.5" width="12" height="14" rx="1.2" fill="#bcd5f5"/><path d="M3,2.5 H8 L11,5.5 V14.5 H3 Z" fill="#dceafb" stroke="#3d78cf" stroke-width="1.1"/><path d="M8,2.5 L8,5.5 L11,5.5" fill="none" stroke="#3d78cf" stroke-width="0.8"/><path d="M10.5,10.5 V15.8 M7.8,13.2 H13.2" stroke="#2d68c4" stroke-width="1.3"/></svg><div style="left:456.4px;top:100.83px;font-family:'Liberation Sans', sans-serif;font-size:8px;line-height:8px;color:#1e1e1e;white-space:nowrap;-webkit-text-stroke:0.15px #1e1e1e;">Add...</div><svg style="position:absolute;left:442px;top:120px;" width="14" height="15" viewBox="0 0 14 15"><path d="M7.5,13.5 H1.5 V1.5 H6 L9.5,5 V8.5" fill="none" stroke="#555" stroke-width="0.85"/><path d="M6,1.5 L7.2,4.5" fill="none" stroke="#555" stroke-width="0.7"/><path d="M12.2,10.8 A2.2,2.2 0 1 0 11.4,13" fill="none" stroke="#555" stroke-width="0.85"/><path d="M12.8,9.4 L12.3,11.2 L10.8,10.6" fill="none" stroke="#555" stroke-width="0.7"/></svg><div style="left:456.4px;top:123.53px;font-family:'Liberation Sans', sans-serif;font-size:8px;line-height:8px;color:#1e1e1e;white-space:nowrap;-webkit-text-stroke:0.15px #1e1e1e;">Update...</div><svg style="position:absolute;left:442px;top:143px;" width="14" height="15" viewBox="0 0 14 15"><path d="M7.5,13.5 H1.5 V1.5 H6 L9.5,5 V9" fill="none" stroke="#555" stroke-width="0.85"/><path d="M6,1.5 L7.2,4.5" fill="none" stroke="#555" stroke-width="0.7"/><path d="M8.8,10.2 L12.6,14 M12.6,10.2 L8.8,14" stroke="#555" stroke-width="0.85"/></svg><div style="left:456.4px;top:146.03px;font-family:'Liberation Sans', sans-serif;font-size:8px;line-height:8px;color:#1e1e1e;white-space:nowrap;-webkit-text-stroke:0.15px #1e1e1e;">Remove...</div><div style="left:431px;top:64.7px;width:76.7px;height:53.7px;border:3.2px solid #e3161c;box-sizing:border-box;"></div></body></html>
